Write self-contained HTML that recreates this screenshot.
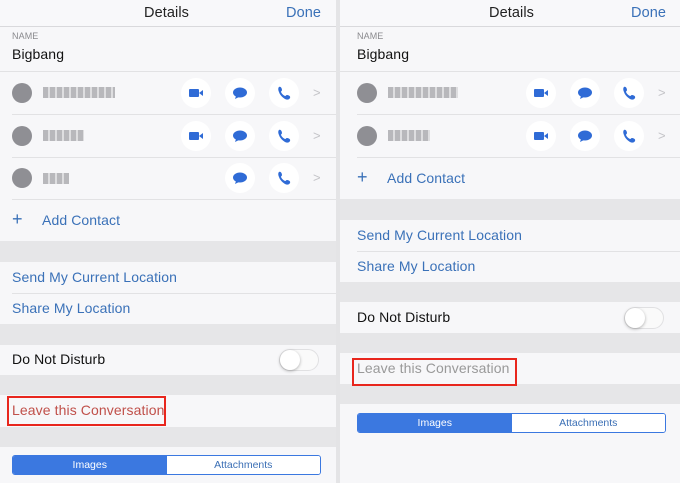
<!DOCTYPE html>
<html><head><meta charset="utf-8"><style>
*{margin:0;padding:0;box-sizing:border-box}
body{width:680px;height:483px;background:#e4e4e6;font-family:"Liberation Sans","Noto Sans CJK SC",sans-serif;position:relative;overflow:hidden}
.p{position:absolute;top:0;height:483px;background:#f7f7f9}
.hdr{position:absolute;left:0;right:0;top:0;height:27px;border-bottom:1px solid #d9d9dc;background:#f8f8fa}
.t{position:absolute;font-size:14px;white-space:nowrap;letter-spacing:0.1px}
.blue{color:#3a71b8}
.gray{position:absolute;left:0;right:0;background:#e6e6e8}
.line{position:absolute;height:1px;background:#e2e2e4}
.av{position:absolute;width:20px;height:20px;border-radius:50%;background:#8f8f94}
.blur{position:absolute;height:11px;background:repeating-linear-gradient(90deg,#a8a8ac 0 5px,#d8d8da 5px 7px);opacity:.8}
.c{position:absolute;width:30px;height:30px;border-radius:50%;background:#fff}
.c svg{position:absolute;left:7px;top:7px}
.chev{position:absolute;color:#c3c3c7;font-size:13px}
.seg{position:absolute;height:20px;border:1px solid #3b78e0;border-radius:3px;display:flex;font-size:10.5px;overflow:hidden}
.seg div{flex:1;display:flex;align-items:center;justify-content:center}
.sw{position:absolute;width:40px;height:22px;border-radius:11px;border:1px solid #e0e0e2;background:#fafafa}
.sw:after{content:"";position:absolute;left:0;top:0;width:20px;height:20px;border-radius:50%;background:#fff;box-shadow:0 1px 3px rgba(0,0,0,.3)}
.red{position:absolute;border:2px solid #e8261d;z-index:5}
</style></head><body>

<!-- LEFT -->
<div class="p" style="left:0;width:336px">
<div class="hdr"></div>
<div class="t" style="left:144px;top:5px;font-size:14.5px;color:#222">Details</div>
<div class="t blue" style="left:286px;top:5px;font-size:14.5px">Done</div>
<div class="t" style="left:12px;top:31px;font-size:9px;color:#8a8a8e">NAME</div>
<div class="t" style="left:12px;top:46px;color:#111">Bigbang</div>
<div class="line" style="left:0;right:0;top:71px"></div>
<div class="av" style="left:12px;top:83px"></div><div class="blur" style="left:43px;top:87px;width:72px"></div>
<div class="c" style="left:181px;top:78px"><svg width="16" height="16"><rect x="1" y="4" width="10" height="8" rx="1" fill="#2f6bd6"/><path d="M11 8l4-3v6z" fill="#2f6bd6"/></svg></div>
<div class="c" style="left:225px;top:78px"><svg width="16" height="16"><ellipse cx="8" cy="7.5" rx="7" ry="5" fill="#2f6bd6"/><path d="M4 11l-1 3 4-2z" fill="#2f6bd6"/></svg></div>
<div class="c" style="left:269px;top:78px"><svg width="16" height="16"><path d="M3 2c2-1 3 2 3 3s-1 1-1 2c1 2 2 3 4 4 1 0 1-1 2-1s4 1 3 3c-1 2-3 2-5 1C6 12 4 10 3 7 2 5 2 3 3 2z" fill="#2f6bd6"/></svg></div>
<div class="chev" style="left:313px;top:85px">&gt;</div>
<div class="line" style="left:12px;right:0;top:114px"></div>
<div class="av" style="left:12px;top:126px"></div><div class="blur" style="left:43px;top:130px;width:41px"></div>
<div class="c" style="left:181px;top:121px"><svg width="16" height="16"><rect x="1" y="4" width="10" height="8" rx="1" fill="#2f6bd6"/><path d="M11 8l4-3v6z" fill="#2f6bd6"/></svg></div>
<div class="c" style="left:225px;top:121px"><svg width="16" height="16"><ellipse cx="8" cy="7.5" rx="7" ry="5" fill="#2f6bd6"/><path d="M4 11l-1 3 4-2z" fill="#2f6bd6"/></svg></div>
<div class="c" style="left:269px;top:121px"><svg width="16" height="16"><path d="M3 2c2-1 3 2 3 3s-1 1-1 2c1 2 2 3 4 4 1 0 1-1 2-1s4 1 3 3c-1 2-3 2-5 1C6 12 4 10 3 7 2 5 2 3 3 2z" fill="#2f6bd6"/></svg></div>
<div class="chev" style="left:313px;top:128px">&gt;</div>
<div class="line" style="left:12px;right:0;top:157px"></div>
<div class="av" style="left:12px;top:168px"></div><div class="blur" style="left:43px;top:173px;width:26px"></div>
<div class="c" style="left:225px;top:163px"><svg width="16" height="16"><ellipse cx="8" cy="7.5" rx="7" ry="5" fill="#2f6bd6"/><path d="M4 11l-1 3 4-2z" fill="#2f6bd6"/></svg></div>
<div class="c" style="left:269px;top:163px"><svg width="16" height="16"><path d="M3 2c2-1 3 2 3 3s-1 1-1 2c1 2 2 3 4 4 1 0 1-1 2-1s4 1 3 3c-1 2-3 2-5 1C6 12 4 10 3 7 2 5 2 3 3 2z" fill="#2f6bd6"/></svg></div>
<div class="chev" style="left:313px;top:170px">&gt;</div>
<div class="line" style="left:12px;right:0;top:199px"></div>
<div class="t blue" style="left:12px;top:210px;font-size:18px;line-height:18px">+</div>
<div class="t blue" style="left:42px;top:212px">Add Contact</div>
<div class="gray" style="top:241px;height:21px"></div>
<div class="t blue" style="left:12px;top:269px">Send My Current Location</div>
<div class="line" style="left:12px;right:0;top:293px"></div>
<div class="t blue" style="left:12px;top:300px">Share My Location</div>
<div class="gray" style="top:324px;height:21px"></div>
<div class="t" style="left:12px;top:351px;color:#111">Do Not Disturb</div>
<div class="sw" style="left:279px;top:349px"></div>
<div class="gray" style="top:375px;height:20px"></div>
<div class="t" style="left:12px;top:402px;color:#c0504a">Leave this Conversation</div>
<div class="gray" style="top:427px;height:20px"></div>
<div class="red" style="left:7px;top:396px;width:159px;height:30px"></div>
<div class="seg" style="left:12px;top:455px;width:309px"><div style="background:#3b78e0;color:#fff">Images</div><div style="color:#3b6fb5;background:#fff">Attachments</div></div>
</div>

<!-- RIGHT -->
<div class="p" style="left:340px;width:340px">
<div class="hdr"></div>
<div class="t" style="left:149px;top:5px;font-size:14.5px;color:#222">Details</div>
<div class="t blue" style="left:291px;top:5px;font-size:14.5px">Done</div>
<div class="t" style="left:17px;top:31px;font-size:9px;color:#8a8a8e">NAME</div>
<div class="t" style="left:17px;top:46px;color:#111">Bigbang</div>
<div class="line" style="left:0;right:0;top:71px"></div>
<div class="av" style="left:17px;top:83px"></div><div class="blur" style="left:48px;top:87px;width:70px"></div>
<div class="c" style="left:186px;top:78px"><svg width="16" height="16"><rect x="1" y="4" width="10" height="8" rx="1" fill="#2f6bd6"/><path d="M11 8l4-3v6z" fill="#2f6bd6"/></svg></div>
<div class="c" style="left:230px;top:78px"><svg width="16" height="16"><ellipse cx="8" cy="7.5" rx="7" ry="5" fill="#2f6bd6"/><path d="M4 11l-1 3 4-2z" fill="#2f6bd6"/></svg></div>
<div class="c" style="left:274px;top:78px"><svg width="16" height="16"><path d="M3 2c2-1 3 2 3 3s-1 1-1 2c1 2 2 3 4 4 1 0 1-1 2-1s4 1 3 3c-1 2-3 2-5 1C6 12 4 10 3 7 2 5 2 3 3 2z" fill="#2f6bd6"/></svg></div>
<div class="chev" style="left:318px;top:85px">&gt;</div>
<div class="line" style="left:17px;right:0;top:114px"></div>
<div class="av" style="left:17px;top:126px"></div><div class="blur" style="left:48px;top:130px;width:42px"></div>
<div class="c" style="left:186px;top:121px"><svg width="16" height="16"><rect x="1" y="4" width="10" height="8" rx="1" fill="#2f6bd6"/><path d="M11 8l4-3v6z" fill="#2f6bd6"/></svg></div>
<div class="c" style="left:230px;top:121px"><svg width="16" height="16"><ellipse cx="8" cy="7.5" rx="7" ry="5" fill="#2f6bd6"/><path d="M4 11l-1 3 4-2z" fill="#2f6bd6"/></svg></div>
<div class="c" style="left:274px;top:121px"><svg width="16" height="16"><path d="M3 2c2-1 3 2 3 3s-1 1-1 2c1 2 2 3 4 4 1 0 1-1 2-1s4 1 3 3c-1 2-3 2-5 1C6 12 4 10 3 7 2 5 2 3 3 2z" fill="#2f6bd6"/></svg></div>
<div class="chev" style="left:318px;top:128px">&gt;</div>
<div class="line" style="left:17px;right:0;top:157px"></div>
<div class="t blue" style="left:17px;top:168px;font-size:18px;line-height:18px">+</div>
<div class="t blue" style="left:47px;top:170px">Add Contact</div>
<div class="gray" style="top:199px;height:21px"></div>
<div class="t blue" style="left:17px;top:227px">Send My Current Location</div>
<div class="line" style="left:17px;right:0;top:251px"></div>
<div class="t blue" style="left:17px;top:258px">Share My Location</div>
<div class="gray" style="top:282px;height:20px"></div>
<div class="t" style="left:17px;top:309px;color:#111">Do Not Disturb</div>
<div class="sw" style="left:284px;top:307px"></div>
<div class="gray" style="top:333px;height:20px"></div>
<div class="t" style="left:17px;top:360px;color:#999">Leave this Conversation</div>
<div class="gray" style="top:384px;height:20px"></div>
<div class="red" style="left:12px;top:358px;width:165px;height:28px"></div>
<div class="seg" style="left:17px;top:413px;width:309px"><div style="background:#3b78e0;color:#fff">Images</div><div style="color:#3b6fb5;background:#fff">Attachments</div></div>
</div>
</body></html>
